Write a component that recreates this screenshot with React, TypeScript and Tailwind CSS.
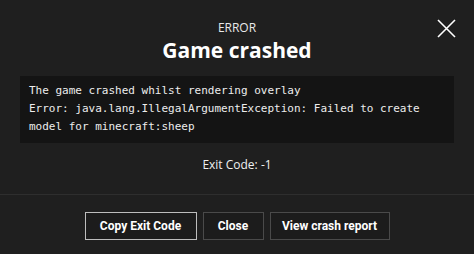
export default function App() {
  return (
    <div className="w-[474px] h-[254px] bg-[#1f1f1f] text-white flex flex-col font-['Open_Sans',sans-serif] overflow-hidden">
      {/* header */}
      <div className="relative pt-[19px] text-center">
        <div className="text-[12px] leading-[17px] text-[#e8e8e8]">ERROR</div>
        <div className="text-[21px] leading-[29px] font-bold">Game crashed</div>
        <button className="absolute right-[18px] top-[19px] w-[19px] h-[19px] text-white">
          <svg viewBox="0 0 19 19" width="19" height="19" fill="none" stroke="currentColor" strokeWidth="1.6">
            <path d="M1 1 L18 18 M18 1 L1 18" />
          </svg>
        </button>
      </div>

      {/* crash message */}
      <div className="mx-[20px] mt-[11px] bg-[#141414] pl-[9px] pr-[6px] pt-[6px] pb-[7px] font-['DejaVu_Sans_Mono',monospace] text-[11px] leading-[18px] text-[#ededed]">
        <div>The game crashed whilst rendering overlay</div>
        <div>Error: java.lang.IllegalArgumentException: Failed to create</div>
        <div>model for minecraft:sheep</div>
      </div>

      <div className="mt-[13px] text-center text-[12px] leading-[18px] text-[#f0f0f0]">Exit Code: -1</div>

      <div className="mt-[20px] border-t border-[#2e2e2e]" />

      {/* actions */}
      <div className="pt-[17px] flex justify-center gap-[6px] font-['Roboto',sans-serif] text-[12px] font-bold">
        <button className="h-[28px] w-[112px] border border-[#bdbdbd] bg-[#1c1c1c]">Copy Exit Code</button>
        <button className="h-[28px] w-[61px] border border-[#4a4a4a] bg-[#1c1c1c]">Close</button>
        <button className="h-[28px] w-[120px] border border-[#4a4a4a] bg-[#1c1c1c]">View crash report</button>
      </div>
    </div>
  );
}
